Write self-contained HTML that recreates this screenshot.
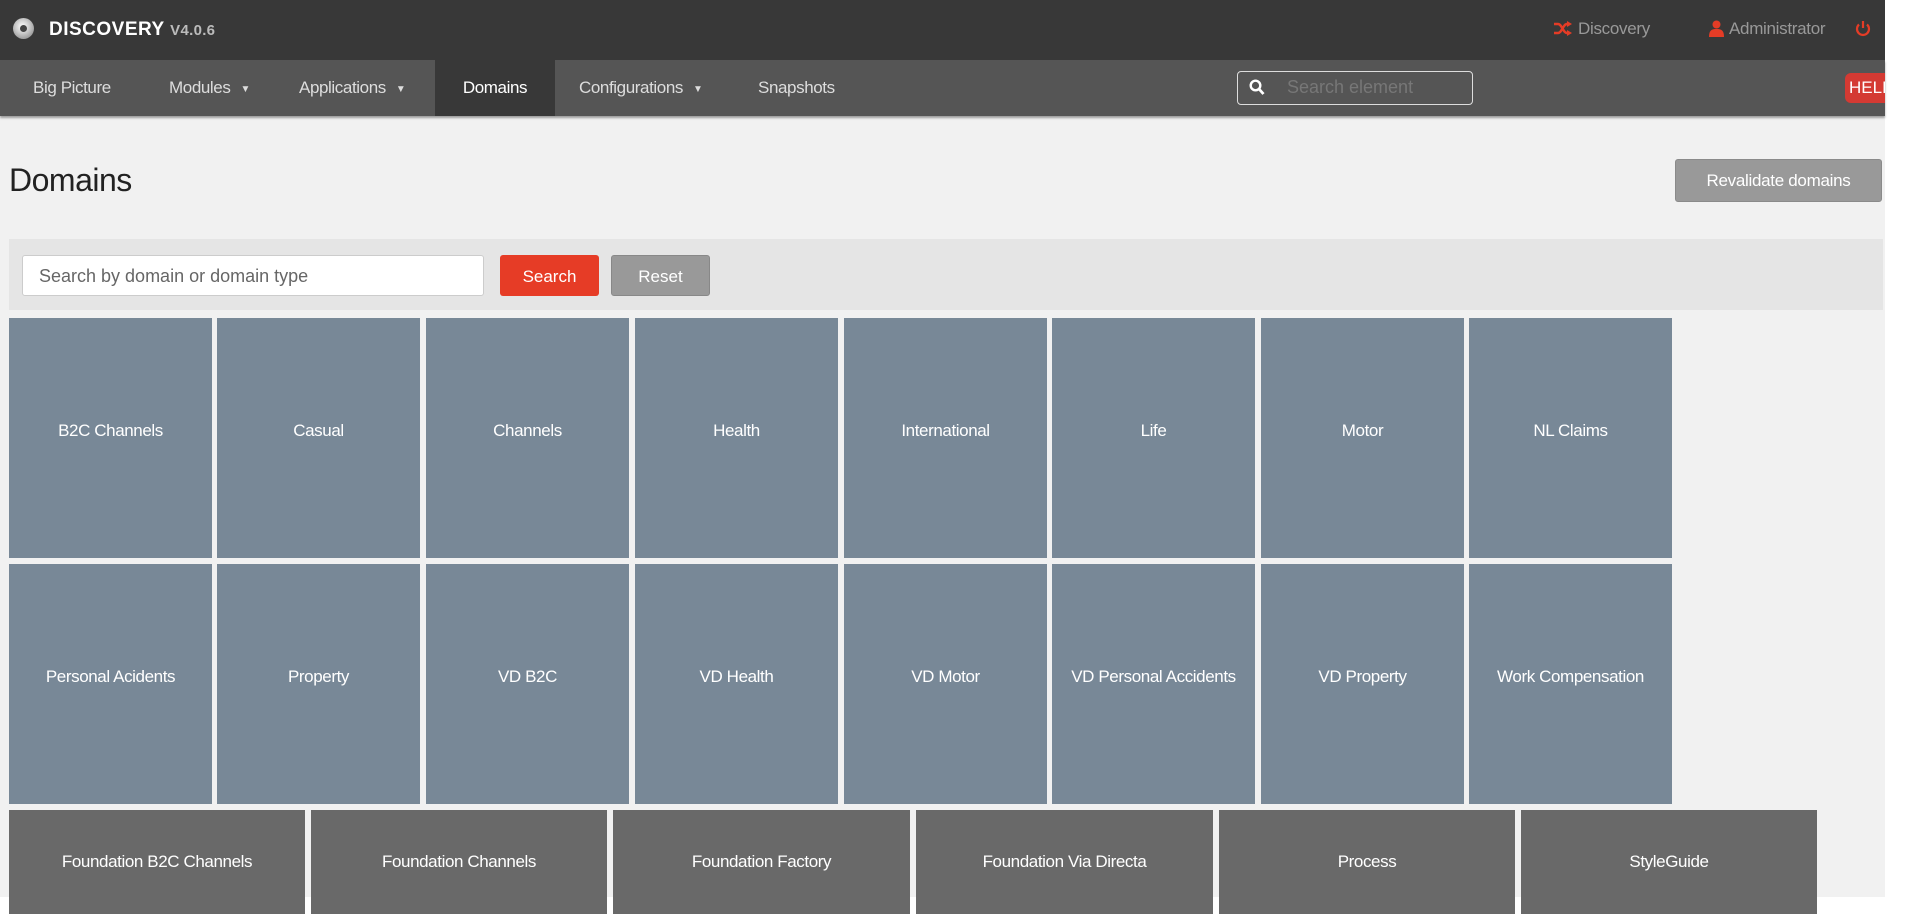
<!DOCTYPE html>
<html><head><meta charset="utf-8"><style>
*{box-sizing:border-box;margin:0;padding:0}
body{width:1920px;height:897px;overflow:hidden;background:#fff;font-family:"Liberation Sans",sans-serif;position:relative}
.page{position:absolute;left:0;top:0;width:1885px;height:897px;background:#f1f1f1}
.top{position:absolute;left:0;top:0;width:1885px;height:60px;background:#383838}
.nav{position:absolute;left:0;top:60px;width:1885px;height:56px;background:#555;box-shadow:0 2px 2px rgba(0,0,0,.35)}
.abs{position:absolute;white-space:nowrap}
.navi{position:absolute;top:0;height:56px;line-height:56px;color:#ddd;font-size:17px;letter-spacing:-0.4px}
.car{font-size:10px;margin-left:10px;vertical-align:1px}
.tile{position:absolute;background:#788897;color:#fff;font-size:17px;letter-spacing:-0.4px;display:flex;align-items:center;justify-content:center;white-space:nowrap;padding-bottom:14px}
.t3{background:#696969;padding-bottom:0}
</style></head><body>
<div class="page">
<div class="top">
 <div class="abs" style="left:13px;top:18px;width:21px;height:21px;border-radius:50%;background:radial-gradient(circle at 45% 40%,#fff 0,#ccc 40%,#777 100%)"><div style="position:absolute;left:7px;top:7px;width:7px;height:7px;border-radius:50%;background:#444"></div></div>
 <div class="abs" style="left:49px;top:19px;color:#fff;font-size:19px;font-weight:bold;letter-spacing:0.5px">DISCOVERY <span style="font-size:15px;color:#bbb;font-weight:bold;letter-spacing:0.3px">V4.0.6</span></div>
 <svg class="abs" style="left:1553px;top:21px" width="19" height="15" viewBox="0 0 19 15"><path d="M1 3 H5 C9 3 10 12 14 12 H16 M1 12 H5 C9 12 10 3 14 3 H16" fill="none" stroke="#e43c26" stroke-width="2.4"/><path d="M14 0 L19 3 L14 6Z M14 9 L19 12 L14 15Z" fill="#e43c26"/></svg>
 <div class="abs" style="left:1578px;top:19px;color:#999;font-size:17px;letter-spacing:-0.3px">Discovery</div>
 <svg class="abs" style="left:1709px;top:20px" width="15" height="17" viewBox="0 0 15 17"><circle cx="7.5" cy="4.5" r="4" fill="#e43c26"/><path d="M0 17 C0 10 3 9 7.5 9 C12 9 15 10 15 17Z" fill="#e43c26"/></svg>
 <div class="abs" style="left:1729px;top:19px;color:#999;font-size:17px;letter-spacing:-0.3px">Administrator</div>
 <svg class="abs" style="left:1855px;top:20px" width="16" height="18" viewBox="0 0 16 18"><path d="M4 4.5 A6 6 0 1 0 12 4.5" fill="none" stroke="#e43c26" stroke-width="2.2"/><path d="M8 1 V8" stroke="#e43c26" stroke-width="2.2"/></svg>
</div>
<div class="nav">
 <div class="navi" style="left:33px">Big Picture</div>
 <div class="navi" style="left:169px">Modules<span class="car">▼</span></div>
 <div class="navi" style="left:299px">Applications<span class="car">▼</span></div>
 <div class="navi" style="left:435px;width:120px;background:#383838;color:#fff;text-align:center">Domains</div>
 <div class="navi" style="left:579px">Configurations<span class="car">▼</span></div>
 <div class="navi" style="left:758px">Snapshots</div>
 <div class="abs" style="left:1237px;top:11px;width:236px;height:34px;border:1px solid #ddd;border-radius:4px"></div>
 <svg class="abs" style="left:1249px;top:19px" width="16" height="17" viewBox="0 0 16 17"><circle cx="6.5" cy="6.5" r="4.8" fill="none" stroke="#fff" stroke-width="2.4"/><path d="M10 10 L14.5 15" stroke="#fff" stroke-width="2.8"/></svg>
 <div class="abs" style="left:1287px;top:17px;color:#777;font-size:18px">Search element</div>
 <div class="abs" style="left:1845px;top:13px;width:40px;height:30px;background:#d43a33;border-radius:6px 0 0 6px;color:#fff;font-size:17px;line-height:30px;padding-left:4px;overflow:hidden">HELP</div>
</div>
<div class="abs" style="left:9px;top:162px;font-size:32px;color:#222;letter-spacing:-0.5px">Domains</div>
<div class="abs" style="left:1675px;top:159px;width:207px;height:43px;background:#999;border:1px solid #8a8a8a;border-radius:3px;color:#fff;font-size:17px;line-height:41px;text-align:center;letter-spacing:-0.3px">Revalidate domains</div>
<div class="abs" style="left:9px;top:239px;width:1874px;height:71px;background:#e5e5e5"></div>
<div class="abs" style="left:22px;top:255px;width:462px;height:41px;background:#fff;border:1px solid #ccc;border-radius:3px;color:#666;font-size:18px;line-height:41px;padding-left:16px">Search by domain or domain type</div>
<div class="abs" style="left:500px;top:255px;width:99px;height:41px;background:#e63c26;border-radius:3px;color:#fff;font-size:17px;line-height:43px;text-align:center">Search</div>
<div class="abs" style="left:611px;top:255px;width:99px;height:41px;background:#999;border:1px solid #888;border-radius:3px;color:#fff;font-size:17px;line-height:41px;text-align:center">Reset</div>

<div class="tile" style="left:9px;top:318px;width:203px;height:240px">B2C Channels</div>
<div class="tile" style="left:217px;top:318px;width:203px;height:240px">Casual</div>
<div class="tile" style="left:426px;top:318px;width:203px;height:240px">Channels</div>
<div class="tile" style="left:635px;top:318px;width:203px;height:240px">Health</div>
<div class="tile" style="left:844px;top:318px;width:203px;height:240px">International</div>
<div class="tile" style="left:1052px;top:318px;width:203px;height:240px">Life</div>
<div class="tile" style="left:1261px;top:318px;width:203px;height:240px">Motor</div>
<div class="tile" style="left:1469px;top:318px;width:203px;height:240px">NL Claims</div>

<div class="tile" style="left:9px;top:564px;width:203px;height:240px">Personal Acidents</div>
<div class="tile" style="left:217px;top:564px;width:203px;height:240px">Property</div>
<div class="tile" style="left:426px;top:564px;width:203px;height:240px">VD B2C</div>
<div class="tile" style="left:635px;top:564px;width:203px;height:240px">VD Health</div>
<div class="tile" style="left:844px;top:564px;width:203px;height:240px">VD Motor</div>
<div class="tile" style="left:1052px;top:564px;width:203px;height:240px">VD Personal Accidents</div>
<div class="tile" style="left:1261px;top:564px;width:203px;height:240px">VD Property</div>
<div class="tile" style="left:1469px;top:564px;width:203px;height:240px">Work Compensation</div>

<div class="tile t3" style="left:9px;top:810px;width:296px;height:104px">Foundation B2C Channels</div>
<div class="tile t3" style="left:311px;top:810px;width:296px;height:104px">Foundation Channels</div>
<div class="tile t3" style="left:613px;top:810px;width:297px;height:104px">Foundation Factory</div>
<div class="tile t3" style="left:916px;top:810px;width:297px;height:104px">Foundation Via Directa</div>
<div class="tile t3" style="left:1219px;top:810px;width:296px;height:104px">Process</div>
<div class="tile t3" style="left:1521px;top:810px;width:296px;height:104px">StyleGuide</div>
</div>
</body></html>
